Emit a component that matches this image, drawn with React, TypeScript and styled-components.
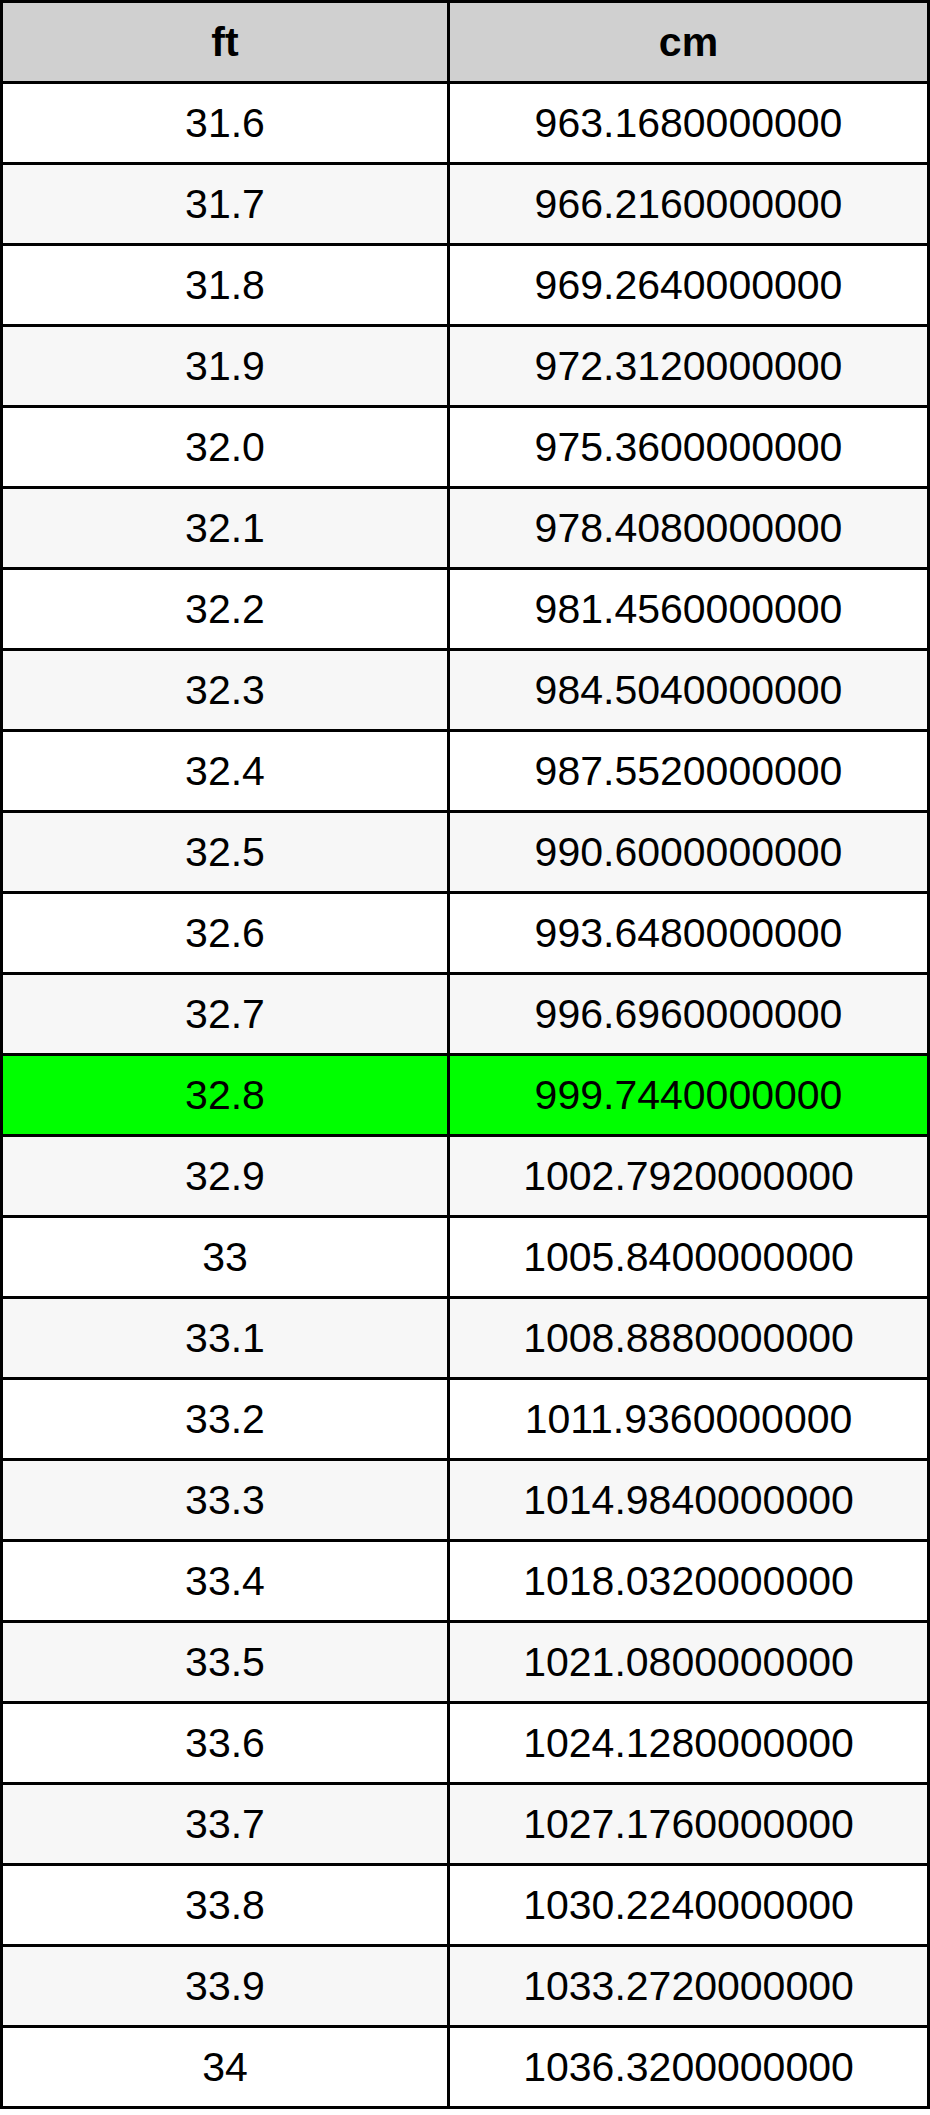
import React from 'react';
import styled, { createGlobalStyle } from 'styled-components';

const GlobalStyle = createGlobalStyle`
  html, body {
    margin: 0;
    padding: 0;
    background: #ffffff;
  }
  body {
    font-family: "Liberation Sans", Arial, sans-serif;
  }
`;

const Table = styled.div`
  display: grid;
  grid-template-columns: 447px 480px;
  width: 927px;
  border-top: 3px solid #000000;
  border-left: 3px solid #000000;
`;

type Tone = 'head' | 'plain' | 'alt' | 'hit';

const tones: Record<Tone, string> = {
  head: '#d0d0d0',
  plain: '#ffffff',
  alt: '#f7f7f7',
  hit: '#00ff00',
};

const Cell = styled.div<{ $tone: Tone }>`
  height: 78px;
  display: flex;
  align-items: center;
  justify-content: center;
  border-right: 3px solid #000000;
  border-bottom: 3px solid #000000;
  background: ${(p) => tones[p.$tone]};
  color: #000000;
  font-size: 41px;
  font-weight: ${(p) => (p.$tone === 'head' ? 700 : 400)};
  line-height: 1;
`;

const rows: [string, string][] = [
  ['31.6', '963.1680000000'],
  ['31.7', '966.2160000000'],
  ['31.8', '969.2640000000'],
  ['31.9', '972.3120000000'],
  ['32.0', '975.3600000000'],
  ['32.1', '978.4080000000'],
  ['32.2', '981.4560000000'],
  ['32.3', '984.5040000000'],
  ['32.4', '987.5520000000'],
  ['32.5', '990.6000000000'],
  ['32.6', '993.6480000000'],
  ['32.7', '996.6960000000'],
  ['32.8', '999.7440000000'],
  ['32.9', '1002.7920000000'],
  ['33', '1005.8400000000'],
  ['33.1', '1008.8880000000'],
  ['33.2', '1011.9360000000'],
  ['33.3', '1014.9840000000'],
  ['33.4', '1018.0320000000'],
  ['33.5', '1021.0800000000'],
  ['33.6', '1024.1280000000'],
  ['33.7', '1027.1760000000'],
  ['33.8', '1030.2240000000'],
  ['33.9', '1033.2720000000'],
  ['34', '1036.3200000000'],
];

const HIGHLIGHT = '32.8';

export default function App() {
  return (
    <>
      <GlobalStyle />
      <Table>
        <Cell $tone="head">ft</Cell>
        <Cell $tone="head">cm</Cell>
        {rows.map(([ft, cm], i) => {
          const tone: Tone = ft === HIGHLIGHT ? 'hit' : i % 2 === 1 ? 'alt' : 'plain';
          return (
            <React.Fragment key={ft}>
              <Cell $tone={tone}>{ft}</Cell>
              <Cell $tone={tone}>{cm}</Cell>
            </React.Fragment>
          );
        })}
      </Table>
    </>
  );
}
